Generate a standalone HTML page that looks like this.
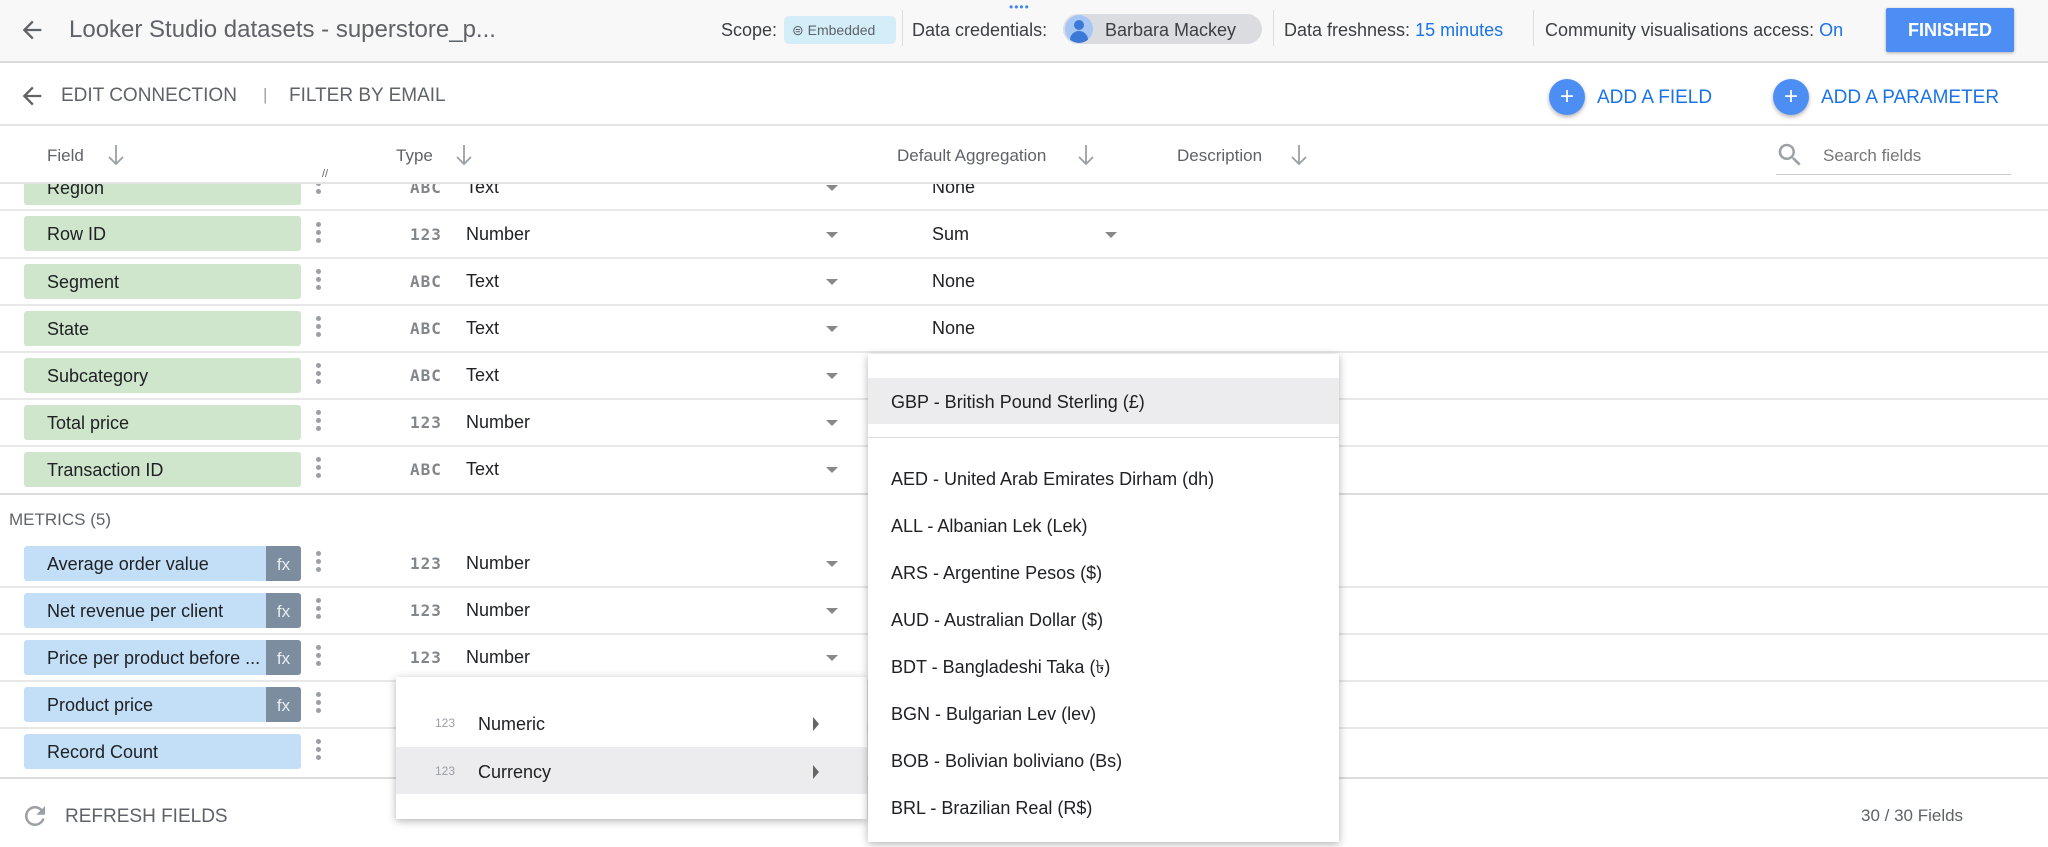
<!DOCTYPE html>
<html><head><meta charset="utf-8"><style>
*{box-sizing:border-box;margin:0;padding:0}
body{width:2048px;height:847px;overflow:hidden;background:#fff;font-family:"Liberation Sans",sans-serif;color:#202124;position:relative}
.a{position:absolute;white-space:nowrap}
.top{position:absolute;left:0;top:0;width:2048px;height:63px;background:#f8f8f8;border-bottom:2px solid #dadada}
.bar2{position:absolute;left:0;top:63px;width:2048px;height:63px;background:#fff;border-bottom:2px solid #e3e3e3}
.t{font-size:18px;color:#3c4043}
.div{position:absolute;top:10px;width:1px;height:36px;background:#ddd}
.hdr{font-size:17px;color:#5f6368}
.line{position:absolute;left:0;width:2048px;height:2px;background:#e8e8e8}
.pill{position:absolute;left:24px;width:277px;height:35px;border-radius:3px;font-size:18px;line-height:37px;padding-left:23px}
.g{background:#cfe6cc}.b{background:#c2dff7}
.fx{position:absolute;right:0;top:0;width:35px;height:35px;background:#7b8d9e;color:#e8eef3;text-align:center;font-size:17px;border-radius:0 3px 3px 0}
.keb{position:absolute;left:316px;width:5px}
.keb i{display:block;width:5px;height:5px;border-radius:50%;background:#9aa0a6;margin-bottom:3px}
.ti{position:absolute;left:410px;font-size:16px;color:#80868b;font-weight:bold;letter-spacing:1px;font-family:"DejaVu Sans Mono",monospace;margin-top:1px}
.tt{position:absolute;left:466px;font-size:18px;margin-top:1px}
.dd{position:absolute;left:826px;width:0;height:0;border-left:6px solid transparent;border-right:6px solid transparent;border-top:6px solid #888}
.menu{position:absolute;background:#fff;box-shadow:0 2px 8px rgba(0,0,0,.3)}
.mi{position:absolute;left:0;right:0;font-size:18px;line-height:22px;color:#202124}
.ar{position:absolute;top:18px}
</style></head><body>
<div class="top">
 <svg class="a" style="left:18px;top:16px" width="28" height="28" viewBox="0 0 24 24"><path d="M20 11H7.8l5.6-5.6L12 4l-8 8 8 8 1.4-1.4L7.8 13H20z" fill="#5f6368"/></svg>
 <div class="a" style="left:69px;top:16px;font-size:24px;color:#5f6368">Looker Studio datasets - superstore_p...</div>
 <div class="a" style="left:1009px;top:0;color:#4285f4;font-size:12px;letter-spacing:1px">••••</div>
 <div class="a t" style="left:721px;top:20px">Scope:</div>
 <div class="a" style="left:784px;top:16px;width:112px;height:28px;background:#d3eef8;border-radius:5px;font-size:14px;line-height:28px;color:#5f6368;padding-left:8px">⊜ Embedded</div>
 <div class="div" style="left:902px"></div>
 <div class="a t" style="left:912px;top:20px">Data credentials:</div>
 <div class="a" style="left:1063px;top:14px;width:199px;height:30px;background:#dadce0;border-radius:15px"></div>
 <div class="a" style="left:1065px;top:15px;width:28px;height:28px;border-radius:50%;background:#a6c6f6;overflow:hidden"><div class="a" style="left:9px;top:5px;width:10px;height:10px;border-radius:50%;background:#3c78d8"></div><div class="a" style="left:5px;top:16px;width:18px;height:14px;border-radius:9px 9px 0 0;background:#3c78d8"></div></div>
 <div class="a t" style="left:1105px;top:20px;color:#3c4043">Barbara Mackey</div>
 <div class="div" style="left:1273px"></div>
 <div class="a t" style="left:1284px;top:20px">Data freshness: <span style="color:#1a73e8">15 minutes</span></div>
 <div class="div" style="left:1533px"></div>
 <div class="a t" style="left:1545px;top:20px">Community visualisations access: <span style="color:#1a73e8">On</span></div>
 <div class="a" style="left:1886px;top:8px;width:128px;height:44px;background:#4d8ef4;border-radius:2px;box-shadow:0 1px 3px rgba(0,0,0,.3);color:#fff;font-size:18px;font-weight:bold;line-height:44px;text-align:center">FINISHED</div>
</div>
<div class="bar2">
 <svg class="a" style="left:18px;top:19px" width="28" height="28" viewBox="0 0 24 24"><path d="M20 11H7.8l5.6-5.6L12 4l-8 8 8 8 1.4-1.4L7.8 13H20z" fill="#5f6368"/></svg>
 <div class="a" style="left:61px;top:22px;font-size:19px;color:#5f6368">EDIT CONNECTION</div>
 <div class="a" style="left:263px;top:22px;font-size:17px;color:#9aa0a6">|</div>
 <div class="a" style="left:289px;top:22px;font-size:19px;color:#5f6368">FILTER BY EMAIL</div>
 <div class="a" style="left:1549px;top:16px;width:36px;height:36px;border-radius:50%;background:#4d8ef4;box-shadow:0 2px 4px rgba(0,0,0,.3);color:#fff;text-align:center;line-height:36px;font-size:24px">+</div>
 <div class="a" style="left:1597px;top:24px;font-size:19px;color:#1a73e8">ADD A FIELD</div>
 <div class="a" style="left:1773px;top:16px;width:36px;height:36px;border-radius:50%;background:#4d8ef4;box-shadow:0 2px 4px rgba(0,0,0,.3);color:#fff;text-align:center;line-height:36px;font-size:24px">+</div>
 <div class="a" style="left:1821px;top:24px;font-size:19px;color:#1a73e8">ADD A PARAMETER</div>
</div>
<div class="a" style="left:0;top:184px;width:2048px;height:594px;overflow:hidden">
<div style="position:absolute;left:0;top:-184px;width:2048px;height:847px">
 <div class="pill g" style="top:170px">Region</div><div class="keb" style="top:173px"><i></i><i></i><i></i></div><div class="ti" style="top:177px">ABC</div><div class="tt" style="top:176px">Text</div><div class="dd" style="top:185px"></div><div class="a" style="left:932px;top:177px;font-size:18px">None</div>
 <div class="line" style="top:209px"></div>
 <div class="pill g" style="top:216px">Row ID</div><div class="keb" style="top:222px"><i></i><i></i><i></i></div><div class="ti" style="top:224px">123</div><div class="tt" style="top:223px">Number</div><div class="dd" style="top:232px"></div><div class="a" style="left:932px;top:224px;font-size:18px">Sum</div><div class="dd" style="left:1105px;top:232px"></div>
 <div class="line" style="top:257px"></div>
 <div class="pill g" style="top:264px">Segment</div><div class="keb" style="top:269px"><i></i><i></i><i></i></div><div class="ti" style="top:271px">ABC</div><div class="tt" style="top:270px">Text</div><div class="dd" style="top:279px"></div><div class="a" style="left:932px;top:271px;font-size:18px">None</div>
 <div class="line" style="top:304px"></div>
 <div class="pill g" style="top:311px">State</div><div class="keb" style="top:316px"><i></i><i></i><i></i></div><div class="ti" style="top:318px">ABC</div><div class="tt" style="top:317px">Text</div><div class="dd" style="top:326px"></div><div class="a" style="left:932px;top:318px;font-size:18px">None</div>
 <div class="line" style="top:351px"></div>
 <div class="pill g" style="top:358px">Subcategory</div><div class="keb" style="top:363px"><i></i><i></i><i></i></div><div class="ti" style="top:365px">ABC</div><div class="tt" style="top:364px">Text</div><div class="dd" style="top:373px"></div>
 <div class="line" style="top:398px"></div>
 <div class="pill g" style="top:405px">Total price</div><div class="keb" style="top:410px"><i></i><i></i><i></i></div><div class="ti" style="top:412px">123</div><div class="tt" style="top:411px">Number</div><div class="dd" style="top:420px"></div>
 <div class="line" style="top:445px"></div>
 <div class="pill g" style="top:452px">Transaction ID</div><div class="keb" style="top:457px"><i></i><i></i><i></i></div><div class="ti" style="top:459px">ABC</div><div class="tt" style="top:458px">Text</div><div class="dd" style="top:467px"></div>
 <div class="line" style="top:493px;background:#ddd"></div>
 <div class="a" style="left:9px;top:510px;font-size:17px;color:#5f6368">METRICS (5)</div>
 <div class="pill b" style="top:546px">Average order value<div class="fx">fx</div></div><div class="keb" style="top:551px"><i></i><i></i><i></i></div><div class="ti" style="top:553px">123</div><div class="tt" style="top:552px">Number</div><div class="dd" style="top:561px"></div>
 <div class="line" style="top:586px"></div>
 <div class="pill b" style="top:593px">Net revenue per client<div class="fx">fx</div></div><div class="keb" style="top:598px"><i></i><i></i><i></i></div><div class="ti" style="top:600px">123</div><div class="tt" style="top:599px">Number</div><div class="dd" style="top:608px"></div>
 <div class="line" style="top:633px"></div>
 <div class="pill b" style="top:640px">Price per product before ...<div class="fx">fx</div></div><div class="keb" style="top:645px"><i></i><i></i><i></i></div><div class="ti" style="top:647px">123</div><div class="tt" style="top:646px">Number</div><div class="dd" style="top:655px"></div>
 <div class="line" style="top:680px"></div>
 <div class="pill b" style="top:687px">Product price<div class="fx">fx</div></div><div class="keb" style="top:692px"><i></i><i></i><i></i></div>
 <div class="line" style="top:727px"></div>
 <div class="pill b" style="top:734px">Record Count</div><div class="keb" style="top:739px"><i></i><i></i><i></i></div>
</div></div>
<div class="a" style="left:0;top:126px;width:2048px;height:58px;background:#fff;border-bottom:2px solid #e3e3e3">
 <div class="a hdr" style="left:47px;top:20px">Field</div>
 <svg class="ar" style="left:106px" width="20" height="22" viewBox="0 0 20 22"><path d="M10 1v19M3 13l7 7 7-7" stroke="#9aa0a6" stroke-width="1.8" fill="none"/></svg>
 <div class="a" style="left:322px;top:42px;font-size:11px;color:#666">//</div>
 <div class="a hdr" style="left:396px;top:20px">Type</div>
 <svg class="ar" style="left:454px" width="20" height="22" viewBox="0 0 20 22"><path d="M10 1v19M3 13l7 7 7-7" stroke="#9aa0a6" stroke-width="1.8" fill="none"/></svg>
 <div class="a hdr" style="left:897px;top:20px">Default Aggregation</div>
 <svg class="ar" style="left:1076px" width="20" height="22" viewBox="0 0 20 22"><path d="M10 1v19M3 13l7 7 7-7" stroke="#9aa0a6" stroke-width="1.8" fill="none"/></svg>
 <div class="a hdr" style="left:1177px;top:20px">Description</div>
 <svg class="ar" style="left:1289px" width="20" height="22" viewBox="0 0 20 22"><path d="M10 1v19M3 13l7 7 7-7" stroke="#9aa0a6" stroke-width="1.8" fill="none"/></svg>
 <svg class="a" style="left:1775px;top:14px" width="30" height="30" viewBox="0 0 24 24"><path d="M15.5 14h-.8l-.3-.3A6.5 6.5 0 1 0 9.5 16a6.5 6.5 0 0 0 4.2-1.6l.3.3v.8l5 5 1.5-1.5-5-5zm-6 0A4.5 4.5 0 1 1 14 9.5 4.5 4.5 0 0 1 9.5 14z" fill="#9aa0a6"/></svg>
 <div class="a" style="left:1823px;top:20px;font-size:17px;color:#757575">Search fields</div>
 <div class="a" style="left:1776px;top:48px;width:235px;height:1px;background:#ccc"></div>
</div>
<div class="line" style="top:777px;background:#ddd"></div>
<svg class="a" style="left:20px;top:801px" width="30" height="30" viewBox="0 0 24 24"><path d="M17.65 6.35A7.96 7.96 0 0 0 12 4a8 8 0 1 0 7.73 10h-2.08A6 6 0 1 1 12 6c1.66 0 3.14.69 4.22 1.78L13 11h7V4l-2.35 2.35z" fill="#9aa0a6"/></svg>
<div class="a" style="left:65px;top:806px;font-size:19px;color:#5f6368">REFRESH FIELDS</div>
<div class="a" style="left:1861px;top:806px;font-size:17px;color:#5f6368">30 / 30 Fields</div>
<div class="menu" style="left:396px;top:677px;width:471px;height:142px">
 <div class="a" style="left:39px;top:39px;font-size:12px;color:#9aa0a6">123</div><div class="a" style="left:82px;top:37px;font-size:18px">Numeric</div>
 <div class="a" style="left:417px;top:40px;border-top:7px solid transparent;border-bottom:7px solid transparent;border-left:6px solid #666"></div>
 <div class="a" style="left:0;top:70px;width:471px;height:47px;background:#ececee"></div>
 <div class="a" style="left:39px;top:87px;font-size:12px;color:#9aa0a6">123</div><div class="a" style="left:82px;top:85px;font-size:18px">Currency</div>
 <div class="a" style="left:417px;top:88px;border-top:7px solid transparent;border-bottom:7px solid transparent;border-left:6px solid #666"></div>
</div>
<div class="menu" style="left:868px;top:354px;width:471px;height:488px">
 <div class="a" style="left:0;top:24px;width:471px;height:46px;background:#ececee"></div>
 <div class="mi a" style="left:23px;top:37px">GBP - British Pound Sterling (£)</div>
 <div class="a" style="left:0;top:83px;width:471px;height:1px;background:#ddd"></div>
 <div class="mi a" style="left:23px;top:114px">AED - United Arab Emirates Dirham (dh)</div>
 <div class="mi a" style="left:23px;top:161px">ALL - Albanian Lek (Lek)</div>
 <div class="mi a" style="left:23px;top:208px">ARS - Argentine Pesos ($)</div>
 <div class="mi a" style="left:23px;top:255px">AUD - Australian Dollar ($)</div>
 <div class="mi a" style="left:23px;top:302px">BDT - Bangladeshi Taka (৳)</div>
 <div class="mi a" style="left:23px;top:349px">BGN - Bulgarian Lev (lev)</div>
 <div class="mi a" style="left:23px;top:396px">BOB - Bolivian boliviano (Bs)</div>
 <div class="mi a" style="left:23px;top:443px">BRL - Brazilian Real (R$)</div>
</div>
</body></html>
